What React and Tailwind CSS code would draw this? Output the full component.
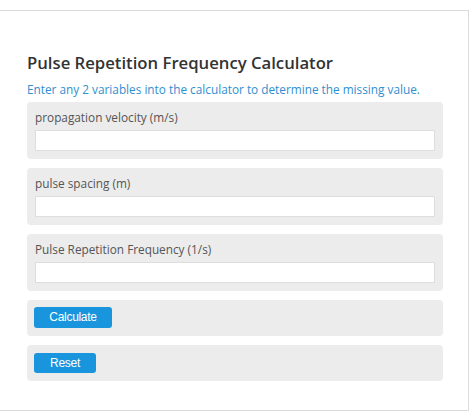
export default function App() {
  const fields = [
    "propagation velocity (m/s)",
    "pulse spacing (m)",
    "Pulse Repetition Frequency (1/s)",
  ];
  return (
    <div className="w-[474px] h-[415px] bg-white pt-[10px]" style={{ fontFamily: '"Open Sans", "Noto Sans", sans-serif' }}>
      <div className="w-[469px] h-[401px] border-t border-r border-b border-[#dcdcdc] pl-[27px] pt-[40px]">
        <h1 className="text-[16.7px] leading-[24px] font-semibold text-[#333] whitespace-nowrap">
          Pulse Repetition Frequency Calculator
        </h1>
        <p className="mt-[5px] text-[11.8px] leading-[18px] text-[#2f8fcf] whitespace-nowrap">
          Enter any 2 variables into the calculator to determine the missing value.
        </p>
        <div className="mt-[4px] w-[416px] flex flex-col gap-[9px]">
          {fields.map((f) => (
            <div key={f} className="bg-[#ececec] rounded-[4px] px-[8px] pt-[6px] pb-[8px]">
              <div className="text-[11.8px] leading-[18px] text-[#555] whitespace-nowrap">{f}</div>
              <input
                type="text"
                className="mt-[4px] block w-[400px] h-[21px] bg-white border border-[#dedede] outline-none"
              />
            </div>
          ))}
          <div className="bg-[#ececec] rounded-[4px] px-[7px] pt-[7px] pb-[8px]">
            <button
              className="block w-[78px] h-[21px] rounded-[3px] bg-[#1895dc] text-white text-[12px] leading-[21px] tracking-[-0.3px] text-center"
              style={{ fontFamily: '"Liberation Sans", Arial, sans-serif' }}
            >
              Calculate
            </button>
          </div>
          <div className="bg-[#ececec] rounded-[4px] px-[7px] pt-[8px] pb-[8px]">
            <button
              className="block w-[62px] h-[20px] rounded-[3px] bg-[#1895dc] text-white text-[12px] leading-[20px] tracking-[-0.3px] text-center"
              style={{ fontFamily: '"Liberation Sans", Arial, sans-serif' }}
            >
              Reset
            </button>
          </div>
        </div>
      </div>
    </div>
  );
}
